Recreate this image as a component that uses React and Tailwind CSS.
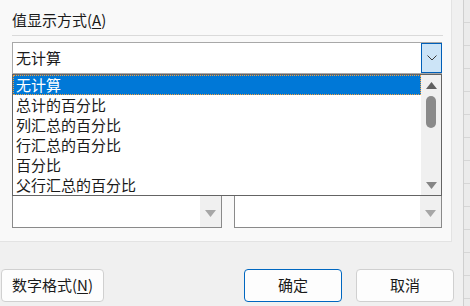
const items = ["无计算", "总计的百分比", "列汇总的百分比", "行汇总的百分比", "百分比", "父行汇总的百分比"];

const font = { fontFamily: '"Microsoft YaHei UI", "Noto Sans CJK SC", sans-serif' };

const Button = ({ children, primary, className = "" }) => (
  <button
    className={`h-[33px] rounded-[4px] border text-[15px] text-[#1a1a1a] bg-[#fdfdfd] ${
      primary ? "border-[#0067c0]" : "border-[#d0d0d0]"
    } ${className}`}
  >
    {children}
  </button>
);

const DownTri = ({ color }) => (
  <svg width="11" height="7" viewBox="0 0 11 7">
    <path d="M0 0 L11 0 L5.5 7 Z" fill={color} />
  </svg>
);

const ListBox = ({ className }) => (
  <div className={`flex h-full border border-[#8a8a8a] bg-white ${className}`}>
    <div className="flex-1" />
    <div className="w-[21px] bg-[#f0f0f0] flex flex-col justify-end items-center pb-[10px]">
      <DownTri color="#a6a6a6" />
    </div>
  </div>
);

export default function App() {
  return (
    <div className="w-[470px] h-[306px] bg-[#f0f0f0] flex overflow-hidden" style={font}>
      <div className="w-[454px] flex flex-col">
        <div className="w-[452px] bg-[#f9f9f9] border-r border-b border-[#e3e3e3] pl-3 pt-[10px] pb-[13px]">
          <div className="h-5 leading-5 text-[15px] text-[#1a1a1a]">
            值显示方式(<span className="underline underline-offset-2">A</span>)
          </div>
          <div className="mt-[5px] h-px w-[431px] bg-[#dadada]" />

          <div className="relative mt-[6px] w-[430px] h-[32px] z-10">
            <div className="flex h-full border border-[#a8a8a8] bg-white">
              <div className="flex-1 pl-[3px] leading-[30px] text-[15px] text-[#1a1a1a]">无计算</div>
              <div className="w-[21px] -mr-px border border-[#005fb8] bg-[#cce4f7] flex items-center justify-center">
                <svg width="10" height="6" viewBox="0 0 10 6">
                  <path d="M0.5 0.5 L5 5 L9.5 0.5" fill="none" stroke="#3a3a3a" strokeWidth="1" />
                </svg>
              </div>
            </div>

            <div className="absolute left-0 top-[32px] w-[430px] h-[122px] border border-[#646464] bg-white flex">
              <div className="flex-1 flex flex-col">
                {items.map((t, i) => (
                  <div
                    key={t}
                    className={`h-5 leading-[18px] pl-[2px] text-[15px] ${
                      i === 0
                        ? "bg-[#0078d7] text-white border border-dotted border-[#f0a040]"
                        : "text-[#1a1a1a] border border-transparent"
                    }`}
                  >
                    {t}
                  </div>
                ))}
              </div>
              <div className="w-[20px] bg-[#f0f0f0] flex flex-col items-center pt-[7px]">
                <svg width="11" height="7" viewBox="0 0 11 7">
                  <path d="M0 7 L11 7 L5.5 0 Z" fill="#606060" />
                </svg>
                <div className="mt-[7px] w-[10px] h-[32px] rounded-full bg-[#8a8a8a]" />
                <div className="mt-[54px]">
                  <DownTri color="#858585" />
                </div>
              </div>
            </div>
          </div>

          <div className="mt-[26px] h-[128px] flex gap-3">
            <ListBox className="w-[210px]" />
            <ListBox className="w-[208px]" />
          </div>
        </div>

        <div className="mt-[27px] flex items-center pl-px">
          <Button className="w-[103px]">
            数字格式(<span className="underline underline-offset-2">N</span>)
          </Button>
          <div className="flex-1" />
          <Button primary className="w-[98px]">确定</Button>
          <Button className="w-[98px] ml-[14px]">取消</Button>
        </div>
      </div>

      <div className="flex-1 flex">
        <div className="w-[9px]" />
        <div className="flex-1 border-l border-[#cfcfcf] bg-[#ebebeb] flex flex-col">
          {Array.from({ length: 14 }).map((_, i) => (
            <div key={i} className="h-[23px] shrink-0 border-b border-[#d6d6d6]" />
          ))}
        </div>
      </div>
    </div>
  );
}
